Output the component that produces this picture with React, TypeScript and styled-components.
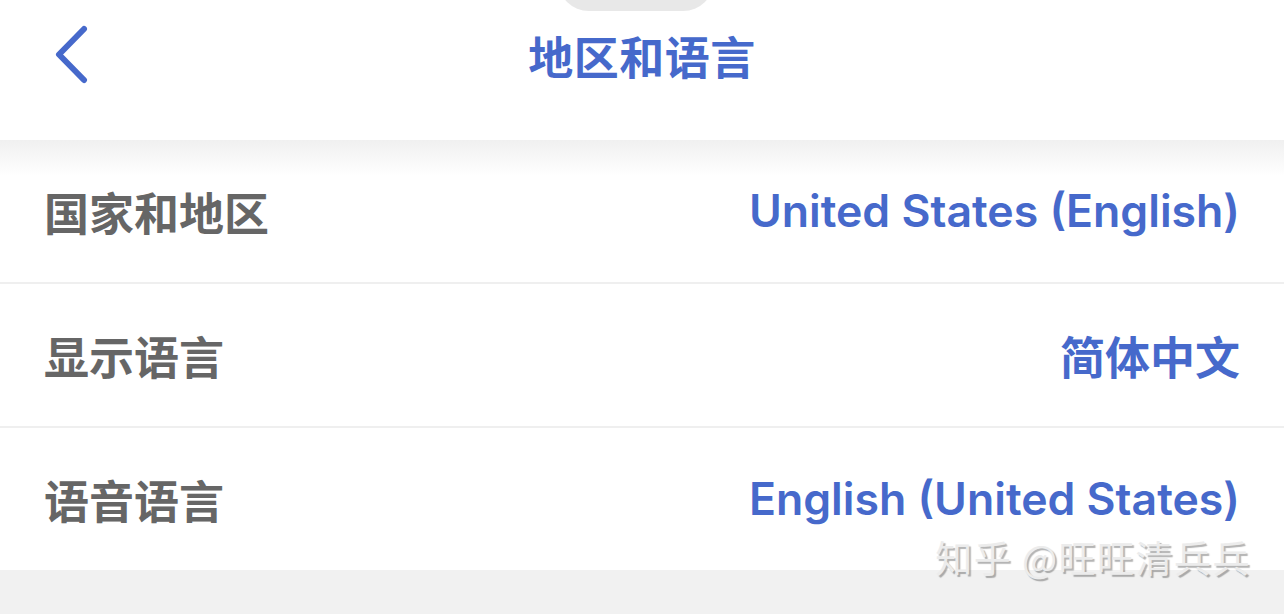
import React from "react";
import styled, { createGlobalStyle } from "styled-components";

const blue = "#4669cb";

const GlobalStyle = createGlobalStyle`
  html, body {
    margin: 0;
    padding: 0;
    background: #f1f1f1;
  }
  body {
    font-family: Inter, "Noto Sans CJK SC", sans-serif;
  }
`;

const Page = styled.div`
  width: 1284px;
  height: 614px;
  position: relative;
  overflow: hidden;
  background: #f1f1f1;
  display: flex;
  flex-direction: column;
`;

const Header = styled.header`
  position: relative;
  height: 140px;
  flex-shrink: 0;
  background: #ffffff;
  display: flex;
  align-items: center;
  justify-content: center;
  padding-bottom: 30px;
  box-sizing: border-box;
`;

const Pill = styled.div`
  position: absolute;
  top: -20px;
  left: 558px;
  width: 156px;
  height: 31px;
  border-radius: 0 0 40px 40px;
  background: #e8e8e8;
`;

const BackButton = styled.button`
  position: absolute;
  left: 50px;
  top: 24px;
  width: 44px;
  height: 64px;
  padding: 0;
  border: none;
  background: none;
  display: flex;
  align-items: center;
  justify-content: center;
`;

const Title = styled.h1`
  margin: 0;
  font-family: "Noto Sans CJK SC", sans-serif;
  font-size: 45px;
  font-weight: 700;
  color: ${blue};
  letter-spacing: 0.5px;
`;

const List = styled.section`
  background: #ffffff;
  display: flex;
  flex-direction: column;
  position: relative;
  &::before {
    content: "";
    position: absolute;
    left: 0;
    right: 0;
    top: 0;
    height: 36px;
    background: linear-gradient(#f0f0f0, rgba(255, 255, 255, 0));
  }
`;

const Row = styled.div<{ $last?: boolean }>`
  position: relative;
  height: 142px;
  border-bottom: ${(p) => (p.$last ? "none" : "2px solid #efefef")};
  display: flex;
  align-items: center;
  justify-content: space-between;
  padding: 0 44px;
`;

const Label = styled.span`
  font-family: "Noto Sans CJK SC", sans-serif;
  font-size: 45px;
  font-weight: 600;
  color: #666666;
`;

const Value = styled.span<{ $cjk?: boolean }>`
  font-family: ${(p) =>
    p.$cjk ? `"Noto Sans CJK SC", sans-serif` : `Inter, "Noto Sans CJK SC", sans-serif`};
  font-size: ${(p) => (p.$cjk ? 45 : 44.6)}px;
  font-weight: ${(p) => (p.$cjk ? 700 : 600)};
  color: ${blue};
`;

const Footer = styled.div`
  flex: 1;
  background: #f1f1f1;
`;

const Watermark = styled.div`
  position: absolute;
  right: 33px;
  bottom: 30px;
  font-family: "Noto Sans CJK SC", sans-serif;
  font-size: 37px;
  font-weight: 400;
  color: #ececec;
  text-shadow: 2px 2px 1px rgba(0, 0, 0, 0.3);
  letter-spacing: 1.5px;
`;

const rows = [
  { label: "国家和地区", value: "United States (English)", cjk: false },
  { label: "显示语言", value: "简体中文", cjk: true },
  { label: "语音语言", value: "English (United States)", cjk: false },
];

export default function App() {
  return (
    <Page>
      <GlobalStyle />
      <Header>
        <Pill />
        <BackButton aria-label="返回">
          <svg width="40" height="62" viewBox="0 0 40 62">
            <path
              d="M32 4 L7 29.5 L32 55"
              fill="none"
              stroke={blue}
              strokeWidth="6"
              strokeLinecap="round"
              strokeLinejoin="round"
            />
          </svg>
        </BackButton>
        <Title>地区和语言</Title>
      </Header>
      <List>
        {rows.map((r, i) => (
          <Row key={r.label} $last={i === rows.length - 1}>
            <Label>{r.label}</Label>
            <Value $cjk={r.cjk}>{r.value}</Value>
          </Row>
        ))}
      </List>
      <Footer />
      <Watermark>知乎 @旺旺清兵兵</Watermark>
    </Page>
  );
}
